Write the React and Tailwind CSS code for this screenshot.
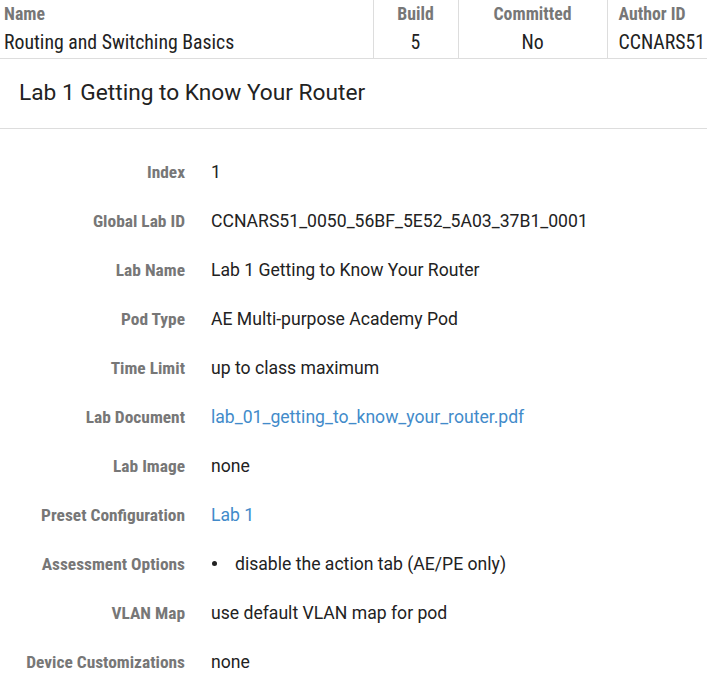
const rows = [
  { label: 'Index', value: '1' },
  { label: 'Global Lab ID', value: 'CCNARS51_0050_56BF_5E52_5A03_37B1_0001' },
  { label: 'Lab Name', value: 'Lab 1 Getting to Know Your Router' },
  { label: 'Pod Type', value: 'AE Multi-purpose Academy Pod' },
  { label: 'Time Limit', value: 'up to class maximum' },
  { label: 'Lab Document', value: 'lab_01_getting_to_know_your_router.pdf', link: true },
  { label: 'Lab Image', value: 'none' },
  { label: 'Preset Configuration', value: 'Lab 1', link: true },
  { label: 'Assessment Options', list: ['disable the action tab (AE/PE only)'] },
  { label: 'VLAN Map', value: 'use default VLAN map for pod' },
  { label: 'Device Customizations', value: 'none' },
];

const condensed = "font-['Roboto_Condensed','Roboto',sans-serif] [font-stretch:75%]";

export default function App() {
  return (
    <div className="w-[707px] h-[684px] overflow-hidden bg-white text-[#222] font-['Roboto',sans-serif]">
      {/* course header table */}
      <table className={`w-full border-collapse ${condensed}`}>
        <thead>
          <tr className="h-[28px] text-[17.8px]">
            <th className="text-left font-bold text-[#777] pl-[4px] border-r border-[#ddd] w-[373px]">Name</th>
            <th className="text-center font-bold text-[#777] border-r border-[#ddd] w-[85px]">Build</th>
            <th className="text-center font-bold text-[#777] border-r border-[#ddd] w-[149px]">Committed</th>
            <th className="text-left font-bold text-[#777] pl-[11px]">Author ID</th>
          </tr>
        </thead>
        <tbody>
          <tr className="h-[28px] border-b border-[#ddd] text-[19.8px]">
            <td className="pl-[4px] border-r border-[#ddd]">Routing and Switching Basics</td>
            <td className="text-center border-r border-[#ddd]">5</td>
            <td className="text-center border-r border-[#ddd]">No</td>
            <td className="pl-[11px] whitespace-nowrap">CCNARS51</td>
          </tr>
        </tbody>
      </table>

      <div className="h-[70px] flex items-center px-[19px] pb-[1px] border-b border-[#ddd]">
        <h1 className="text-[22.7px] text-[#222] font-normal">Lab 1 Getting to Know Your Router</h1>
      </div>

      <dl className="pt-[31px] flex flex-col gap-[25px] text-[17.6px]">
        {rows.map((r) => (
          <div key={r.label} className="flex items-center h-[24px]">
            <dt className={`w-[185px] shrink-0 text-right text-[17.4px] font-bold text-[#777] ${condensed}`}>{r.label}</dt>
            <dd className="pl-[26px] whitespace-nowrap">
              {r.list ? (
                <ul>
                  {r.list.map((item) => (
                    <li key={item} className="flex items-center">
                      <span className="ml-[1px] w-[5px] h-[5px] rounded-full bg-[#222] mr-[18px]"></span>
                      {item}
                    </li>
                  ))}
                </ul>
              ) : r.link ? (
                <a href="#" className="text-[#428bca]">{r.value}</a>
              ) : (
                r.value
              )}
            </dd>
          </div>
        ))}
      </dl>
    </div>
  );
}
